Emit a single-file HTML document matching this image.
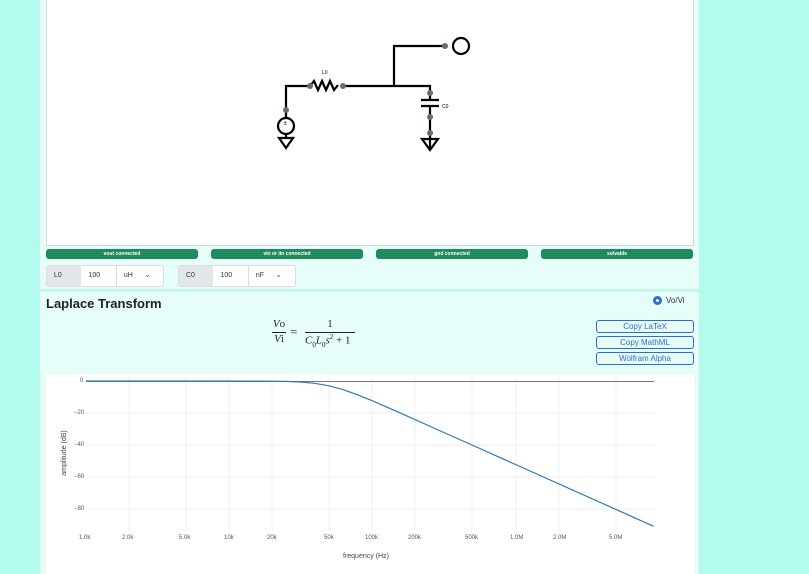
<!DOCTYPE html>
<html><head><meta charset="utf-8"><style>
*{box-sizing:border-box;margin:0;padding:0}
body{width:809px;height:574px;background:#b3fbec;font-family:"Liberation Sans",sans-serif;position:relative;overflow:hidden}
.abs{position:absolute}
.bar{position:absolute;top:249px;height:10px;background:#1f8a5b;border-radius:3px;color:#fff;font-size:5px;font-weight:bold;text-align:center;line-height:10px}
.grp{position:absolute;top:265px;height:22px;border:1px solid #d8dde0;border-radius:3px;display:flex;font-size:7px;color:#333;background:#fff}
.grp div{line-height:20px;padding-left:7px}
.btn{position:absolute;left:596px;width:98px;height:13px;border:1px solid #2a6ed8;border-radius:3px;color:#2a6ed8;font-size:8px;text-align:center;line-height:11px;background:#eafcf8}
.tk{position:absolute;font-size:6px;color:#555}
</style></head><body>
<div class="abs" style="left:40px;top:0;width:659px;height:289px;background:#e6fdf9"></div>
<div class="abs" style="left:40px;top:289px;width:659px;height:3px;background:#c3f5ea"></div>
<div class="abs" style="left:40px;top:292px;width:659px;height:282px;background:#e6fdf9"></div>
<div class="abs" style="left:46px;top:0;width:648px;height:246px;background:#fff;border:1px solid #d0dde0;border-top:none"></div>
<svg class="abs" style="left:0;top:0" width="809" height="260">
<g stroke="#000" stroke-width="2.2" fill="none">
<path d="M286 110V86H310M343 86H430V100M394 86V46H445M430 106V150"/>
<path d="M310 86l4-5 4 9 4-9 4 9 4-9 4 9 4-5"/>
<circle cx="461" cy="46" r="8"/>
<circle cx="286" cy="126" r="8"/>
<path d="M286 110V118M286 134V138M279 138h14l-7 10z"/>
<path d="M421 100h18M421 106h18"/>
<path d="M422 139h16l-8 11z"/>
</g>
<g fill="#5e7070"><circle cx="286" cy="110" r="3"/><circle cx="310" cy="86" r="3"/><circle cx="343" cy="86" r="3"/><circle cx="445" cy="46" r="3"/><circle cx="430" cy="93" r="3"/><circle cx="430" cy="117" r="3"/><circle cx="430" cy="133" r="3"/></g>
<text x="322" y="74" font-size="5" font-family="Liberation Sans">L0</text>
<text x="442" y="108" font-size="5" font-family="Liberation Sans">C0</text>
<text x="283.5" y="125" font-size="6">±</text>
</svg>
<div class="bar" style="left:46px;width:152px">vout connected</div>
<div class="bar" style="left:211px;width:152px">vin or iin connected</div>
<div class="bar" style="left:376px;width:152px">gnd connected</div>
<div class="bar" style="left:541px;width:152px">solvable</div>
<div class="grp" style="left:46px;width:118px"><div style="width:35px;background:#e4e7ea">L0</div><div style="width:36px;border-right:1px solid #d8dde0">100</div><div style="width:47px">uH &nbsp;&nbsp;&nbsp;&nbsp;&nbsp;⌄</div></div>
<div class="grp" style="left:178px;width:118px"><div style="width:35px;background:#e4e7ea">C0</div><div style="width:36px;border-right:1px solid #d8dde0">100</div><div style="width:47px">nF &nbsp;&nbsp;&nbsp;&nbsp;&nbsp;⌄</div></div>
<div class="abs" style="left:46px;top:296px;font-size:13px;font-weight:bold;color:#222">Laplace Transform</div>
<div class="abs" style="left:653px;top:296px;width:9px;height:9px;border-radius:50%;border:3px solid #2a6ed8;background:#fff"></div>
<div class="abs" style="left:666px;top:296px;font-size:8px;color:#333">Vo/Vi</div>
<div class="abs" style="left:272px;top:318px;font-family:'Liberation Serif',serif;font-size:11px;color:#222">
<div class="abs" style="left:0;top:0;width:14px;text-align:center"><i>V</i>o</div>
<div class="abs" style="left:0;top:14px;width:14px;height:1px;background:#222"></div>
<div class="abs" style="left:0;top:15px;width:14px;text-align:center"><i>V</i>i</div>
<div class="abs" style="left:18px;top:6px;font-size:13px">=</div>
<div class="abs" style="left:33px;top:0;width:50px;text-align:center">1</div>
<div class="abs" style="left:33px;top:14px;width:50px;height:1px;background:#222"></div>
<div class="abs" style="left:33px;top:15px;width:52px;white-space:nowrap"><i>C</i><sub style="font-size:7px">0</sub><i>L</i><sub style="font-size:7px">0</sub><i>s</i><sup style="font-size:7px">2</sup> + 1</div>
</div>
<div class="btn" style="top:320px">Copy LaTeX</div>
<div class="btn" style="top:336px">Copy MathML</div>
<div class="btn" style="top:352px">Wolfram Alpha</div>
<div class="abs" style="left:46px;top:374px;width:648px;height:200px;background:#fff"></div>
<svg class="abs" style="left:0;top:0" width="809" height="574">
<g stroke="#eef0f2" stroke-width="1">
<path d="M129 377V530M186 377V530M229 377V530M272 377V530M329 377V530M372 377V530M415 377V530M472 377V530M516 377V530M559 377V530M616 377V530M86 413H654M86 445H654M86 477H654M86 509H654"/>
</g>
<path d="M86 381.5H654" stroke="#777" stroke-width="1"/>
<path d="M86 381L186 381L257.5 381.1L286 381.4L300.4 382L314.7 383.3L329 385.8L343.3 389.7L357.6 394.8L371.9 400.6L400.5 413.1L436 429L472 445L653.6 526.3" stroke="#2f7bb3" stroke-width="1.2" fill="none"/>
<text x="66" y="453" transform="rotate(-90 66 453)" font-size="7" fill="#444" font-family="Liberation Sans" text-anchor="middle">amplitude (dB)</text>
</svg>
<div class="tk" style="left:80px;top:378px">0</div>
<div class="tk" style="left:74px;top:410px">−20</div>
<div class="tk" style="left:74px;top:442px">−40</div>
<div class="tk" style="left:74px;top:474px">−60</div>
<div class="tk" style="left:74px;top:506px">−80</div>
<div class="tk" style="left:79px;top:535px">1.0k</div>
<div class="tk" style="left:122px;top:535px">2.0k</div>
<div class="tk" style="left:179px;top:535px">5.0k</div>
<div class="tk" style="left:224px;top:535px">10k</div>
<div class="tk" style="left:267px;top:535px">20k</div>
<div class="tk" style="left:324px;top:535px">50k</div>
<div class="tk" style="left:365px;top:535px">100k</div>
<div class="tk" style="left:408px;top:535px">200k</div>
<div class="tk" style="left:465px;top:535px">500k</div>
<div class="tk" style="left:510px;top:535px">1.0M</div>
<div class="tk" style="left:553px;top:535px">2.0M</div>
<div class="tk" style="left:609px;top:535px">5.0M</div>
<div class="abs" style="left:343px;top:553px;font-size:7px;color:#444">frequency (Hz)</div>
</body></html>
